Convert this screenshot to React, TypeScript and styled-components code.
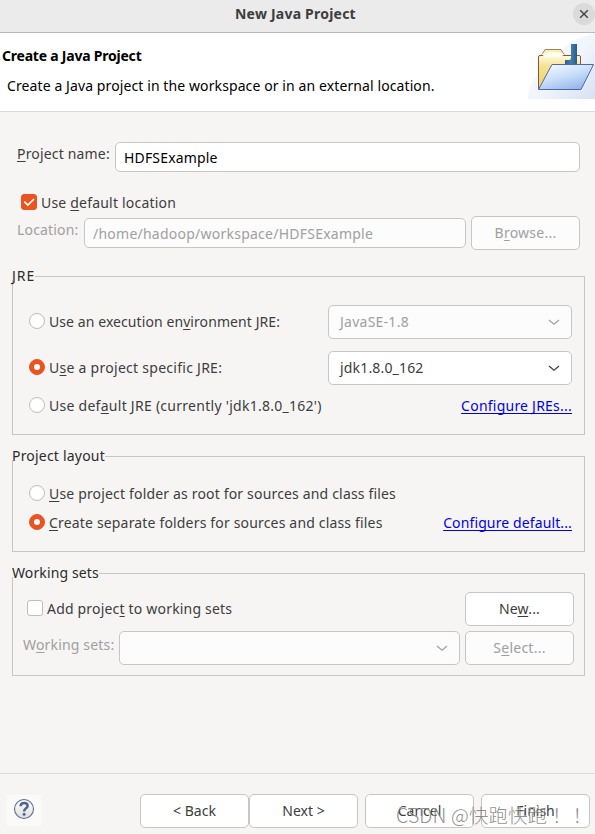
import React from 'react';
import styled, { createGlobalStyle } from 'styled-components';

const Global = createGlobalStyle`
  * { box-sizing: border-box; }
  body { margin: 0; background: #f6f5f4; }
`;

const Dialog = styled.div`
  position: relative;
  display: flex;
  flex-direction: column;
  width: 595px;
  height: 834px;
  overflow: hidden;
  background: #f6f5f4;
  color: #3d3d3d;
  font: 14px/20px 'Noto Sans', 'Noto Sans CJK SC', sans-serif;
`;

const Text = styled.span<{ $track?: number; $bold?: boolean }>`
  display: block;
  flex: none;
  white-space: pre;
  letter-spacing: ${(p) => p.$track ?? 0.17}px;
  font-weight: ${(p) => (p.$bold ? 700 : 400)};
`;

const Key = styled.span`
  text-decoration: underline 1px;
  text-underline-offset: 2px;
  text-decoration-skip-ink: none;
`;

const TitleBar = styled.header`
  display: flex;
  align-items: center;
  flex: none;
  height: 33px;
  padding: 0 0 5px 235px;
  background: #ebebeb;
  border-bottom: 1px solid #b9b9b9;
`;

const CloseButton = styled.button`
  display: flex;
  align-items: center;
  justify-content: center;
  flex: none;
  width: 22px;
  height: 22px;
  margin-left: auto;
  padding: 0;
  border: 0;
  border-radius: 50%;
  background: #dadada;
`;

const Banner = styled.section`
  display: flex;
  justify-content: space-between;
  flex: none;
  height: 79px;
  background: #fff;
  color: #000;
  border-bottom: 1px solid #dadada;
`;

const BannerText = styled.div`
  display: flex;
  flex-direction: column;
  gap: 10px;
  padding: 13px 0 0 2px;
  & > :last-child { margin-left: 5px; }
`;

const Content = styled.main`
  display: flex;
  flex-direction: column;
  flex: 1;
`;

const Row = styled.div<{ $h: number; $left?: number; $right?: number; $top?: number; $align?: string }>`
  display: flex;
  flex: none;
  align-items: ${(p) => p.$align ?? 'center'};
  height: ${(p) => p.$h}px;
  margin-top: ${(p) => p.$top ?? 0}px;
  padding: 0 ${(p) => p.$right ?? 0}px 0 ${(p) => p.$left ?? 0}px;
`;

const FieldLabel = styled.label<{ $w: number; $raise?: number; $disabled?: boolean }>`
  flex: none;
  width: ${(p) => p.$w}px;
  padding-bottom: ${(p) => p.$raise ?? 6}px;
  color: ${(p) => (p.$disabled ? '#a0a0a0' : 'inherit')};
`;

const Field = styled.div<{ $w: number; $disabled?: boolean }>`
  display: flex;
  align-items: center;
  flex: none;
  width: ${(p) => p.$w}px;
  height: 30px;
  padding: 1px 8px 0;
  border: 1px solid #c6c6c6;
  border-radius: 5px;
  background: ${(p) => (p.$disabled ? '#fcfcfc' : '#fff')};
  color: ${(p) => (p.$disabled ? '#a0a0a0' : '#000')};
`;

const Button = styled.button<{ $dim?: boolean; $ml?: string }>`
  display: flex;
  align-items: center;
  justify-content: center;
  flex: none;
  width: 109px;
  height: 34px;
  margin: 0 0 0 ${(p) => p.$ml ?? '0'};
  padding: 0;
  border: 1px solid #c6c6c6;
  border-radius: 5px;
  background: ${(p) => (p.$dim ? '#fcfcfc' : '#fff')};
  color: ${(p) => (p.$dim ? '#a0a0a0' : '#3d3d3d')};
  font: inherit;
`;

const Combo = styled.div<{ $w: number; $disabled?: boolean }>`
  display: flex;
  align-items: center;
  justify-content: space-between;
  flex: none;
  width: ${(p) => p.$w}px;
  height: 34px;
  margin-left: auto;
  padding: 0 11px;
  border: 1px solid #c6c6c6;
  border-radius: 5px;
  background: ${(p) => (p.$disabled ? '#fcfcfc' : '#fff')};
  color: ${(p) => (p.$disabled ? '#a0a0a0' : '#3d3d3d')};
  & svg { margin-left: auto; }
`;

const Radio = styled.span<{ $on?: boolean }>`
  display: flex;
  align-items: center;
  justify-content: center;
  flex: none;
  width: 16px;
  height: 16px;
  margin: 0 4px 2px 0;
  border: 1px solid ${(p) => (p.$on ? '#e95420' : '#bdbdbd')};
  border-radius: 50%;
  background: ${(p) => (p.$on ? '#e95420' : '#fff')};
  &::after {
    content: '';
    width: 6px;
    height: 6px;
    border-radius: 50%;
    background: #fff;
  }
`;

const Check = styled.span<{ $on?: boolean }>`
  display: flex;
  align-items: center;
  justify-content: center;
  flex: none;
  width: 16px;
  height: 16px;
  margin: 0 4px 2px 0;
  border: 1px solid ${(p) => (p.$on ? '#e95420' : '#bdbdbd')};
  border-radius: 3px;
  background: ${(p) => (p.$on ? '#e95420' : '#fff')};
`;

const Group = styled.section<{ $h: number; $top: number }>`
  display: flex;
  flex-direction: column;
  flex: none;
  width: 573px;
  height: ${(p) => p.$h}px;
  margin: ${(p) => p.$top}px 0 0 12px;
  border: 1px solid #c6c6c6;
`;

const GroupTitle = styled.div`
  align-self: flex-start;
  flex: none;
  height: 14px;
  margin: -11px 0 0 -1px;
  background: #f6f5f4;
  color: #2c2c2c;
  line-height: 20px;
`;

const Link = styled.a`
  margin-left: auto;
  color: #0000ee;
  text-decoration: underline 1px;
  text-underline-offset: 2px;
  text-decoration-skip-ink: none;
`;

const Footer = styled.footer`
  display: flex;
  flex: none;
  height: 61px;
  padding: 20px 0 0 7px;
  border-top: 1px solid #dadada;
`;

const Help = styled.div`
  display: flex;
  align-items: center;
  justify-content: center;
  flex: none;
  width: 34px;
  height: 31px;
  margin: 1px 99px 0 0;
  padding-bottom: 3px;
  background: #fafafa;
`;

const Watermark = styled.div`
  position: absolute;
  left: 396px;
  top: 801px;
  color: rgba(112, 112, 112, 0.8);
  font: 300 19.5px/28px 'Noto Sans CJK SC', sans-serif;
  white-space: nowrap;
  text-shadow: -1px -1px 0 rgba(255, 255, 255, 0.5);
  pointer-events: none;
`;

const Latin = styled.span`
  letter-spacing: 0.15px;
`;

const Marks = styled.span`
  font-family: 'Noto Sans CJK TC', sans-serif;
  letter-spacing: 1px;
`;

const Chevron = () => (
  <svg width="12" height="8" viewBox="0 0 12 8" fill="none" stroke="currentColor" strokeWidth="1.2">
    <path d="M1 2 L6 6.2 L11 2" />
  </svg>
);

const CloseIcon = () => (
  <svg width="10" height="10" viewBox="0 0 10 10" stroke="#3d3d3d" strokeWidth="1.3">
    <path d="M1.2 1.2 L8.8 8.8 M8.8 1.2 L1.2 8.8" />
  </svg>
);

const Tick = () => (
  <svg width="14" height="14" viewBox="0 0 14 14" fill="none" stroke="#fff" strokeWidth="1.7">
    <path d="M2.3 6.7 L5.8 10 L12 4" />
  </svg>
);

const HelpIcon = () => (
  <svg width="22" height="22" viewBox="0 0 22 22" fill="none">
    <defs>
      <linearGradient id="helpFill" x1="0" y1="0" x2="0" y2="1">
        <stop offset="0" stopColor="#fff" />
        <stop offset="1" stopColor="#dedede" />
      </linearGradient>
    </defs>
    <circle cx="11" cy="11" r="9.5" fill="url(#helpFill)" stroke="#5d708f" strokeWidth="1.1" />
    <path d="M7.6 8.2 C7.7 5.8 9.2 5.1 11.2 5.1 C13.4 5.1 14.6 6.2 14.6 7.9 C14.6 10.4 11.1 10.3 11.1 13.4" stroke="#50658b" strokeWidth="2.5" />
    <circle cx="11.1" cy="16.3" r="1.5" fill="#50658b" />
  </svg>
);

const ProjectIcon = () => (
  <svg width="67" height="66" viewBox="0 0 67 66">
    <defs>
      <linearGradient id="glow" x1="0" y1="0" x2="1" y2="1">
        <stop offset="0.1" stopColor="#fff" />
        <stop offset="0.6" stopColor="#eef3fb" />
        <stop offset="1" stopColor="#d6e1f5" />
      </linearGradient>
      <linearGradient id="back" x1="0" y1="0" x2="0" y2="1">
        <stop offset="0" stopColor="#fffbe0" />
        <stop offset="0.3" stopColor="#f5e394" />
        <stop offset="1" stopColor="#f1cf5c" />
      </linearGradient>
      <linearGradient id="front" x1="0.2" y1="0" x2="0.8" y2="1">
        <stop offset="0" stopColor="#f2faff" />
        <stop offset="0.5" stopColor="#c5dcf8" />
        <stop offset="1" stopColor="#8db2e8" />
      </linearGradient>
      <linearGradient id="jay" x1="0" y1="0" x2="1" y2="0">
        <stop offset="0" stopColor="#2b628f" />
        <stop offset="0.5" stopColor="#467eac" />
        <stop offset="1" stopColor="#285d8a" />
      </linearGradient>
    </defs>
    <path d="M0 66 C1 48 8 43 15 38 C22 27 27 24 34 17 C43 6 55 3 67 0 V66Z" fill="url(#glow)" />
    <g transform="translate(-1 0)">
      <path d="M14 23 L18 16.5 H34 L38 23Z" fill="#f8edb5" stroke="#9c8162" />
      <path d="M11.5 56 V24 Q11.5 22.5 13 22.5 H52 Q53.5 22.5 53.5 24 V46 L44 56Z" fill="url(#back)" stroke="#80583f" />
      <ellipse cx="26" cy="21.5" rx="11" ry="2.4" fill="#fffef3" />
      <path d="M44 11 H50 V31 H38 V27 H42 Q44 27 44 25Z" fill="url(#jay)" />
      <path d="M25 31.5 H66.5 L54 56.5 H11.5Z" fill="url(#front)" stroke="#5165b5" strokeLinejoin="round" />
    </g>
  </svg>
);

export default function App() {
  return (
    <Dialog>
      <Global />
      <TitleBar>
        <Text $bold $track={0.22}>New Java Project</Text>
        <CloseButton aria-label="Close"><CloseIcon /></CloseButton>
      </TitleBar>

      <Banner>
        <BannerText>
          <Text $bold $track={-0.22}>Create a Java Project</Text>
          <Text $track={0.1}>Create a Java project in the workspace or in an external location.</Text>
        </BannerText>
        <ProjectIcon />
      </Banner>

      <Content>
        <Row $h={30} $top={30} $left={17}>
          <FieldLabel $w={98}><Text><Key>P</Key>roject name:</Text></FieldLabel>
          <Field $w={465}><Text>HDFSExample</Text></Field>
        </Row>
        <Row $h={20} $top={21} $left={21}>
          <Check $on><Tick /></Check>
          <Text $track={0.2}>Use <Key>d</Key>efault location</Text>
        </Row>
        <Row $h={34} $top={3} $left={17}>
          <FieldLabel $w={67} $disabled><Text>Location:</Text></FieldLabel>
          <Field $w={382} $disabled><Text $track={0.24}>/home/hadoop/workspace/HDFSExample</Text></Field>
          <Button $dim $ml="5px"><Text $track={0.25}>B<Key>r</Key>owse...</Text></Button>
        </Row>

        <Group $h={159} $top={26}>
          <GroupTitle><Text $track={1}>JRE</Text></GroupTitle>
          <Row $h={34} $top={25} $left={16} $right={12}>
            <Radio />
            <Text $track={0.08}>Use an execution en<Key>v</Key>ironment JRE:</Text>
            <Combo $w={244} $disabled><Text $track={0.25}>JavaSE-1.8</Text><Chevron /></Combo>
          </Row>
          <Row $h={34} $top={12} $left={16} $right={12}>
            <Radio $on />
            <Text $track={0.27}>U<Key>s</Key>e a project specific JRE:</Text>
            <Combo $w={244}><Text>jdk1.8.0_162</Text><Chevron /></Combo>
          </Row>
          <Row $h={20} $top={11} $left={16} $right={12}>
            <Radio />
            <Text $track={0.27}>Use def<Key>a</Key>ult JRE (currently 'jdk1.8.0_162')</Text>
            <Link><Text $track={0.23}>Configure JREs...</Text></Link>
          </Row>
        </Group>

        <Group $h={96} $top={21}>
          <GroupTitle><Text $track={0.2}>Project layout</Text></GroupTitle>
          <Row $h={20} $top={24} $left={16}>
            <Radio />
            <Text><Key>U</Key>se project folder as root for sources and class files</Text>
          </Row>
          <Row $h={20} $top={9} $left={16} $right={12}>
            <Radio $on />
            <Text><Key>C</Key>reate separate folders for sources and class files</Text>
            <Link><Text $track={0.12}>Configure default...</Text></Link>
          </Row>
        </Group>

        <Group $h={103} $top={21}>
          <GroupTitle><Text $track={0.12}>Working sets</Text></GroupTitle>
          <Row $h={34} $top={15} $left={14} $right={10}>
            <Check />
            <Text $track={0.19}>Add projec<Key>t</Key> to working sets</Text>
            <Button $ml="auto"><Text>Ne<Key>w</Key>...</Text></Button>
          </Row>
          <Row $h={34} $top={5} $left={10} $right={10}>
            <FieldLabel $w={96} $disabled><Text>W<Key>o</Key>rking sets:</Text></FieldLabel>
            <Combo $w={341} $disabled><Chevron /></Combo>
            <Button $dim $ml="5px"><Text $track={0.25}>S<Key>e</Key>lect...</Text></Button>
          </Row>
        </Group>
      </Content>

      <Footer>
        <Help><HelpIcon /></Help>
        <Button><Text $track={0}>&lt; Back</Text></Button>
        <Button><Text $track={0}>Next &gt;</Text></Button>
        <Button $ml="7px"><Text $track={0}>Cancel</Text></Button>
        <Button $ml="7px"><Text $track={0}>Finish</Text></Button>
      </Footer>
      <Watermark><Latin>CSDN @</Latin>快跑快跑<Marks>！！</Marks></Watermark>
    </Dialog>
  );
}
